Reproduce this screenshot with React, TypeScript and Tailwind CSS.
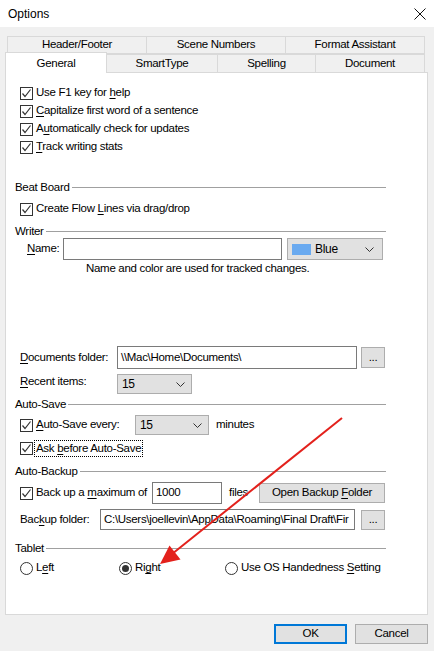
import React from "react";

const font = { fontFamily: '"Liberation Sans", Arial, sans-serif' };

function Check({ checked = true }: { checked?: boolean }) {
  return (
    <span className="w-[13px] h-[13px] border border-[#333] bg-white flex items-center justify-center shrink-0">
      {checked && (
        <svg width="11" height="11" viewBox="0 0 11 11">
          <polyline points="1.5,5.5 4,8.5 9.5,1.5" fill="none" stroke="#333" strokeWidth="1.2" />
        </svg>
      )}
    </span>
  );
}

function Radio({ checked = false }: { checked?: boolean }) {
  return (
    <span className="w-[13px] h-[13px] rounded-full border border-[#333] bg-white flex items-center justify-center shrink-0">
      {checked && <span className="w-[7px] h-[7px] rounded-full bg-[#333]" />}
    </span>
  );
}

function Chevron() {
  return (
    <svg width="9" height="5" viewBox="0 0 9 5" className="shrink-0">
      <polyline points="0.5,0.5 4.5,4.5 8.5,0.5" fill="none" stroke="#333" strokeWidth="1" />
    </svg>
  );
}

function Key({ children }: { children: React.ReactNode }) {
  return <span className="underline underline-offset-2">{children}</span>;
}

function Group({ title }: { title: string }) {
  return (
    <div className="ml-[9px] w-[371px] h-[14px] flex items-center gap-[2px]">
      <span className="leading-[14px]">{title}</span>
      <span className="flex-1 h-px bg-[#a0a0a0]" />
    </div>
  );
}

function CheckRow({ children }: { children: React.ReactNode }) {
  return (
    <div className="ml-[14px] h-[18px] flex items-center gap-[3px]">
      <Check />
      <span>{children}</span>
    </div>
  );
}

function Select({ width, children }: { width: string; children: React.ReactNode }) {
  return (
    <div className={`${width} h-[20px] bg-[#e1e1e1] border border-[#adadad] flex items-center justify-between pl-[4px] pr-[6px]`}>
      <span className="text-[12px]">{children}</span>
      <Chevron />
    </div>
  );
}

const tabTop = ["Header/Footer", "Scene Numbers", "Format Assistant"];

export default function App() {
  return (
    <div
      className="relative w-[434px] h-[651px] bg-[#f0f0f0] text-[11.5px] tracking-[-0.3px] text-black overflow-hidden whitespace-nowrap"
      style={font}
    >
      {/* title bar */}
      <div className="h-[27px] bg-white flex items-center justify-between pl-[8px] pr-[8px]">
        <span className="text-[12px] tracking-normal">Options</span>
        <svg width="12" height="12" viewBox="0 0 12 12">
          <path d="M0.5 0.5 L11.5 11.5 M11.5 0.5 L0.5 11.5" stroke="#111" strokeWidth="1" />
        </svg>
      </div>

      <div className="pt-[9px] pl-[5px]">
        {/* tab rows */}
        <div className="ml-[2px] w-[418px] h-[18px] flex">
          {tabTop.map((t) => (
            <div key={t} className="flex-1 border border-[#d9d9d9] -ml-px first:ml-0 flex items-center justify-center bg-[#f0f0f0]">
              {t}
            </div>
          ))}
        </div>
        <div className="relative z-10 -mt-[2px] h-[20px] flex items-end">
          <div className="w-[102px] h-[21px] -mb-px bg-white border border-b-0 border-[#d9d9d9] flex items-start justify-center pt-[2px]">
            General
          </div>
          <div className="w-[111px] h-[18px] border border-b-0 border-l-0 border-[#d9d9d9] flex items-center justify-center">SmartType</div>
          <div className="w-[98px] h-[18px] border border-b-0 border-l-0 border-[#d9d9d9] flex items-center justify-center">Spelling</div>
          <div className="w-[109px] h-[18px] border border-b-0 border-l-0 border-[#d9d9d9] flex items-center justify-center">Document</div>
        </div>

        {/* page */}
        <div className="w-[423px] h-[543px] bg-white border border-[#d9d9d9] pt-[11px]">
          <CheckRow>Use F1 key for <Key>h</Key>elp</CheckRow>
          <CheckRow><Key>C</Key>apitalize first word of a sentence</CheckRow>
          <CheckRow>A<Key>u</Key>tomatically check for updates</CheckRow>
          <CheckRow><Key>T</Key>rack writing stats</CheckRow>

          <div className="mt-[24px]">
            <Group title="Beat Board" />
          </div>
          <div className="mt-[6px]">
            <CheckRow>Create Flow <Key>L</Key>ines via drag/drop</CheckRow>
          </div>

          <div className="mt-[6px]">
            <Group title="Writer" />
          </div>
          <div className="ml-[21px] h-[22px] flex items-center">
            <span className="w-[36px]"><Key>N</Key>ame:</span>
            <div className="w-[219px] h-[22px] bg-white border border-[#7a7a7a]" />
            <div className="ml-[5px] w-[96px] h-[22px] bg-[#e1e1e1] border border-[#adadad] flex items-center justify-between pl-[4px] pr-[8px]">
              <span className="flex items-center gap-[4px]">
                <span className="w-[19px] h-[11px] bg-[#6aaaf0]" />
                <span className="text-[12px]">Blue</span>
              </span>
              <Chevron />
            </div>
          </div>
          <div className="ml-[80px] h-[14px] mt-[1px] leading-[14px]">Name and color are used for tracked changes.</div>

          <div className="mt-[71px] ml-[14px] h-[23px] flex items-center">
            <span className="w-[97px]"><Key>D</Key>ocuments folder:</span>
            <div className="w-[240px] h-[23px] bg-white border border-[#7a7a7a] pl-[3px] pt-[2px]">\\Mac\Home\Documents\</div>
            <div className="ml-[4px] w-[24px] h-[21px] bg-[#e1e1e1] border border-[#adadad] flex items-center justify-center leading-none">...</div>
          </div>
          <div className="mt-[5px] ml-[14px] h-[20px] flex items-start">
            <span className="w-[97px] -mt-[1px]"><Key>R</Key>ecent items:</span>
            <Select width="w-[75px]">15</Select>
          </div>

          <div className="mt-[3px]">
            <Group title="Auto-Save" />
          </div>
          <div className="mt-[4px] ml-[14px] h-[20px] flex items-center">
            <Check />
            <span className="ml-[3px] w-[99px]"><Key>A</Key>uto-Save every:</span>
            <Select width="w-[74px]">15</Select>
            <span className="ml-[7px]">minutes</span>
          </div>
          <div className="mt-[5px] ml-[14px] h-[17px] flex items-center">
            <Check />
            <span className="ml-[2px] px-[1px] outline-1 outline-dotted outline-black leading-[15px]">Ask <Key>b</Key>efore Auto-Save</span>
          </div>

          <div className="mt-[7px]">
            <Group title="Auto-Backup" />
          </div>
          <div className="mt-[4px] ml-[14px] h-[22px] flex items-center">
            <Check />
            <span className="ml-[3px] w-[116px]">Back up a <Key>m</Key>aximum of</span>
            <div className="w-[70px] h-[22px] bg-white border border-[#7a7a7a] pl-[3px] pt-[1px]">1000</div>
            <span className="ml-[7px] w-[30px]">files</span>
            <div className="w-[126px] h-[20px] bg-[#e1e1e1] border border-[#adadad] flex items-center justify-center">
              <span>Open Backup <Key>F</Key>older</span>
            </div>
          </div>
          <div className="mt-[5px] ml-[14px] h-[21px] flex items-center">
            <span className="w-[80px]">Bac<Key>k</Key>up folder:</span>
            <div className="w-[255px] h-[21px] bg-white border border-[#7a7a7a] pl-[3px] pt-[1px] overflow-hidden">
              <span>C:\Users\joellevin\AppData\Roaming\Final Draft\Fir</span>
            </div>
            <div className="ml-[6px] w-[24px] h-[20px] bg-[#e1e1e1] border border-[#adadad] flex items-center justify-center leading-none">...</div>
          </div>

          <div className="mt-[11px]">
            <Group title="Tablet" />
          </div>
          <div className="mt-[5px] ml-[14px] h-[16px] flex items-center">
            <span className="w-[99px] flex items-center gap-[3px]">
              <Radio />
              <span>L<Key>e</Key>ft</span>
            </span>
            <span className="w-[106px] flex items-center gap-[3px]">
              <Radio checked />
              <span>Ri<Key>g</Key>ht</span>
            </span>
            <span className="flex items-center gap-[3px]">
              <Radio />
              <span>Use OS Handedness <Key>S</Key>etting</span>
            </span>
          </div>
        </div>

        {/* dialog buttons */}
        <div className="mt-[9px] w-[423px] flex justify-end gap-[8px]">
          <div className="w-[73px] h-[20px] bg-[#e1e1e1] border-2 border-[#0078d7] flex items-center justify-center">OK</div>
          <div className="w-[73px] h-[20px] bg-[#e1e1e1] border border-[#adadad] flex items-center justify-center">Cancel</div>
        </div>
      </div>

      {/* red callout arrow */}
      <svg className="absolute inset-0 pointer-events-none" width="434" height="651">
        <line x1="342" y1="418" x2="172" y2="554" stroke="#e3211c" strokeWidth="2" />
        <polygon points="160,564 169.5,545.5 180.5,559.5" fill="#e3211c" />
      </svg>
    </div>
  );
}
